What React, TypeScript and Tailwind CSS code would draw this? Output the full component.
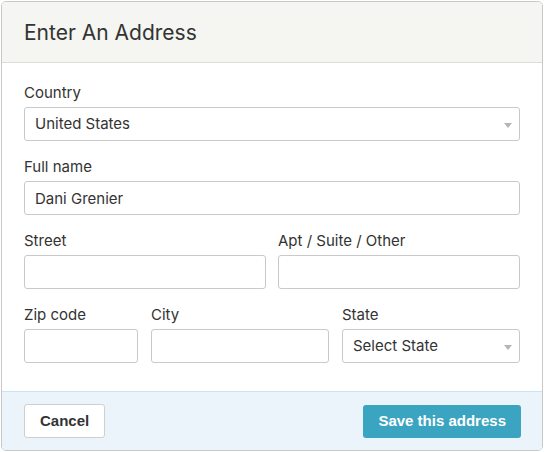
const sans = "font-['Inter','Liberation_Sans',sans-serif]";

function Label({ children }: { children: React.ReactNode }) {
  return <label className="mb-1 block text-[15px] leading-5 text-[#333]">{children}</label>;
}

function TextInput({ value = "" }: { value?: string }) {
  return (
    <input
      defaultValue={value}
      className="block h-[34px] w-full rounded-[3px] border border-[#c9c9c9] bg-white px-[10px] text-[15px] text-[#333] outline-none"
    />
  );
}

function Select({ value }: { value: string }) {
  return (
    <div className="relative h-[34px] w-full rounded-[3px] border border-[#c9c9c9] bg-white">
      <span className="absolute left-[10px] top-1/2 -translate-y-1/2 text-[15px] text-[#333]">{value}</span>
      {/* small grey caret */}
      <span className="absolute right-[7px] top-1/2 h-0 w-0 -translate-y-[1px] border-x-[4px] border-t-[5px] border-x-transparent border-t-[#b5b5b5]" />
    </div>
  );
}

export default function App() {
  return (
    <div className={`min-h-screen bg-white pl-px pt-px ${sans}`}>
      <div className="w-[542px] overflow-hidden rounded-[5px] border border-[#c8c8c8] bg-white">
        <div className="flex h-[61px] items-center border-b border-[#dcdcd8] bg-[#f5f5f1] px-[22px]">
          <h1 className="pt-px text-[21px] font-normal text-[#333]">Enter An Address</h1>
        </div>

        <div className="px-[22px] pb-7 pt-5">
          <div className="mb-4">
            <Label>Country</Label>
            <Select value="United States" />
          </div>
          <div className="mb-4">
            <Label>Full name</Label>
            <TextInput value="Dani Grenier" />
          </div>
          <div className="mb-4 grid grid-cols-2 gap-3">
            <div>
              <Label>Street</Label>
              <TextInput />
            </div>
            <div>
              <Label>Apt / Suite / Other</Label>
              <TextInput />
            </div>
          </div>
          <div className="grid grid-cols-[114px_1fr_1fr] gap-[13px]">
            <div>
              <Label>Zip code</Label>
              <TextInput />
            </div>
            <div>
              <Label>City</Label>
              <TextInput />
            </div>
            <div>
              <Label>State</Label>
              <Select value="Select State" />
            </div>
          </div>
        </div>

        <div className="flex h-[59px] items-center justify-between border-t border-[#cfe3ee] bg-[#eaf4fa] px-[22px]">
          <button className="h-[34px] rounded-[3px] border border-[#cfcfcf] bg-white px-[15px] font-['Liberation_Sans',sans-serif] text-[15px] font-bold text-[#333]">
            Cancel
          </button>
          <button className="-mr-px h-[33px] rounded-[3px] bg-[#3ba4c1] px-[15px] font-['Liberation_Sans',sans-serif] text-[15px] font-bold text-white">
            Save this address
          </button>
        </div>
      </div>
    </div>
  );
}
